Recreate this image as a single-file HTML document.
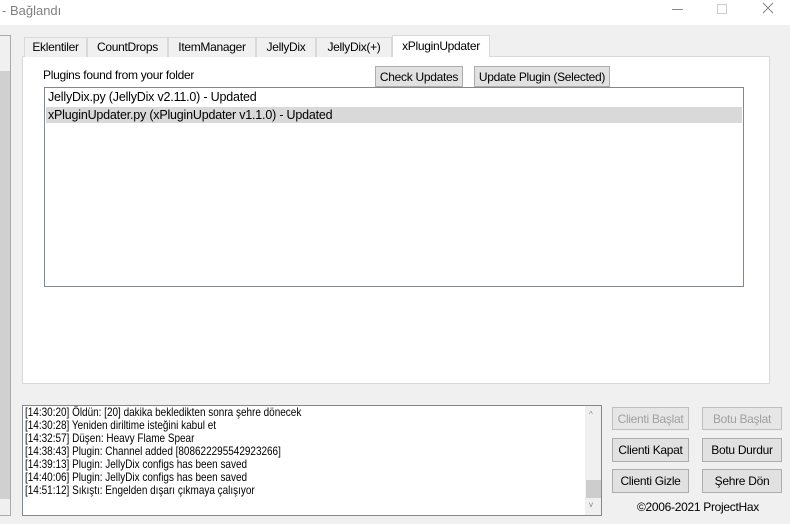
<!DOCTYPE html>
<html><head><style>
*{box-sizing:border-box;margin:0;padding:0}
body{width:790px;height:524px;background:#f0f0f0;font-family:"Liberation Sans",sans-serif;font-size:12px;color:#000;position:relative;overflow:hidden}
.a{position:absolute}
.btn{position:absolute;background:#e1e1e1;border:1px solid #adadad;font-size:12px;text-align:center;white-space:nowrap;display:flex;align-items:center;justify-content:center;letter-spacing:-0.3px}
.dis{color:#a0a0a0;border-color:#bfbfbf;background:#e6e6e6}
.tab{position:absolute;top:37px;height:20px;border:1px solid #d9d9d9;border-bottom:none;background:#f0f0f0;font-size:12px;text-align:center;line-height:18px;letter-spacing:-0.3px}
.log div{height:13px;line-height:13px;font-size:12px;transform:scaleX(.83);transform-origin:left;white-space:nowrap}
</style></head><body>
<div class="a" style="left:0;top:0;width:790px;height:25px;background:#fff"></div>
<div class="a" style="left:2px;top:3px;font-size:13px;color:#808080">- Bağlandı</div>
<div class="a" style="left:672px;top:9px;width:11px;height:1px;background:#888"></div>
<div class="a" style="left:717px;top:4px;width:10px;height:10px;border:1px solid #ccc"></div>
<svg class="a" style="left:762px;top:2px" width="12" height="12"><path d="M1 1L11 11M11 1L1 11" stroke="#888" stroke-width="1"/></svg>
<!-- left strip -->
<div class="a" style="left:-1px;top:35px;width:12px;height:481px;border:1px solid #aaa;background:#f0f0f0"></div>
<div class="a" style="left:0;top:71px;width:10px;height:428px;background:#d0d0d0"></div>
<!-- tab panel -->
<div class="a" style="left:22px;top:56px;width:748px;height:328px;background:#fff;border:1px solid #d9d9d9"></div>
<div class="tab" style="left:24px;width:63px">Eklentiler</div>
<div class="tab" style="left:87px;width:81px">CountDrops</div>
<div class="tab" style="left:168px;width:88px">ItemManager</div>
<div class="tab" style="left:256px;width:60px">JellyDix</div>
<div class="tab" style="left:316px;width:76px">JellyDix(+)</div>
<div class="tab" style="left:392px;top:35px;height:22px;width:98px;background:#fff;line-height:20px">xPluginUpdater</div>
<div class="a" style="left:43px;top:68px;font-size:12px;letter-spacing:-0.3px">Plugins found from your folder</div>
<div class="btn" style="left:375px;top:66px;width:88px;height:21px">Check Updates</div>
<div class="btn" style="left:474px;top:66px;width:136px;height:21px">Update Plugin (Selected)</div>
<div class="a" style="left:44px;top:87px;width:700px;height:200px;border:1px solid #828790;background:#fff"></div>
<div class="a" style="left:48px;top:90px;font-size:12.5px;letter-spacing:-0.2px">JellyDix.py (JellyDix v2.11.0) - Updated</div>
<div class="a" style="left:46px;top:107px;width:696px;height:16px;background:#d9d9d9"></div>
<div class="a" style="left:48px;top:107px;font-size:12.5px;letter-spacing:-0.2px;line-height:16px">xPluginUpdater.py (xPluginUpdater v1.1.0) - Updated</div>
<!-- log -->
<div class="a" style="left:22px;top:405px;width:580px;height:111px;border:1px solid #828790;background:#fff"></div>
<div class="a" style="left:585px;top:406px;width:16px;height:109px;background:#f0f0f0"></div>
<div class="a" style="left:586px;top:480px;width:15px;height:18px;background:#cdcdcd"></div>
<div class="a" style="left:589px;top:410px;font-size:8px;color:#888">^</div>
<div class="a" style="left:589px;top:500px;font-size:8px;color:#888">v</div>
<div class="a log" style="left:25px;top:406px">
<div>[14:30:20] Öldün: [20] dakika bekledikten sonra şehre dönecek</div>
<div>[14:30:28] Yeniden diriltime isteğini kabul et</div>
<div>[14:32:57] Düşen: Heavy Flame Spear</div>
<div>[14:38:43] Plugin: Channel added [808622295542923266]</div>
<div>[14:39:13] Plugin: JellyDix configs has been saved</div>
<div>[14:40:06] Plugin: JellyDix configs has been saved</div>
<div>[14:51:12] Sıkıştı: Engelden dışarı çıkmaya çalışıyor</div>
</div>
<div class="btn dis" style="left:612px;top:407px;width:77px;height:23px">Clienti Başlat</div>
<div class="btn dis" style="left:702px;top:407px;width:80px;height:23px">Botu Başlat</div>
<div class="btn" style="left:612px;top:438px;width:77px;height:24px">Clienti Kapat</div>
<div class="btn" style="left:702px;top:438px;width:80px;height:24px">Botu Durdur</div>
<div class="btn" style="left:612px;top:469px;width:77px;height:24px">Clienti Gizle</div>
<div class="btn" style="left:702px;top:469px;width:80px;height:24px">Şehre Dön</div>
<div class="a" style="left:637px;top:500px;font-size:12px;letter-spacing:-0.3px">©2006-2021 ProjectHax</div>
</body></html>
